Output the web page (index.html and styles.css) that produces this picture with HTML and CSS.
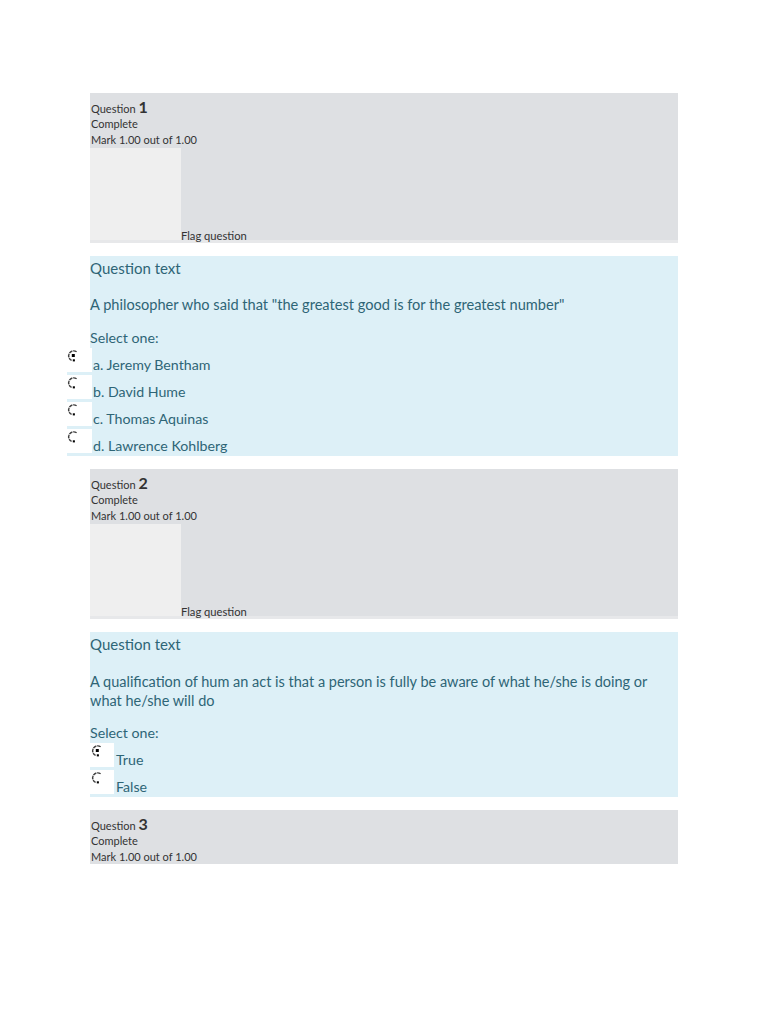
FILE: index.html
```html
<!DOCTYPE html>
<html lang="en">
<head>
<meta charset="utf-8">
<title>Quiz review</title>
<link rel="stylesheet" href="styles.css">
</head>
<body>
<svg width="0" height="0" class="defs" aria-hidden="true">
  <defs>
    <g id="radio-off">
      <path d="M9.6 2.8 A5 5 0 1 0 4.6 11.4" fill="none" stroke="#3f3f3f" stroke-width="1.4" stroke-dasharray="3.6 0.7"/>
      <rect x="5.8" y="10.3" width="2.1" height="2.1" fill="#000"/>
    </g>
    <g id="radio-on">
      <use href="#radio-off"/>
      <rect x="4.8" y="5" width="3" height="3" fill="#000"/>
    </g>
  </defs>
</svg>
<main class="page">
  <section class="info">
    <div class="qno">Question <span class="num">1</span></div>
    <div class="state">Complete</div>
    <div class="grade">Mark 1.00 out of 1.00</div>
    <div class="flag-row">
      <div class="flag-box"></div>
      <div class="flag-label">Flag question</div>
    </div>
  </section>
  <section class="content">
    <h4 class="qtext-title">Question text</h4>
    <p class="qtext">A philosopher who said that "the greatest good is for the greatest number"</p>
    <div class="prompt">Select one:</div>
    <div class="answers out">
      <div class="opt"><span class="rcell"><svg class="radio" viewBox="0 0 13 13"><use href="#radio-on"/></svg></span><span class="lbl">a. Jeremy Bentham</span></div>
      <div class="opt"><span class="rcell"><svg class="radio" viewBox="0 0 13 13"><use href="#radio-off"/></svg></span><span class="lbl">b. David Hume</span></div>
      <div class="opt"><span class="rcell"><svg class="radio" viewBox="0 0 13 13"><use href="#radio-off"/></svg></span><span class="lbl">c. Thomas Aquinas</span></div>
      <div class="opt"><span class="rcell"><svg class="radio" viewBox="0 0 13 13"><use href="#radio-off"/></svg></span><span class="lbl">d. Lawrence Kohlberg</span></div>
    </div>
  </section>

  <section class="info">
    <div class="qno">Question <span class="num">2</span></div>
    <div class="state">Complete</div>
    <div class="grade">Mark 1.00 out of 1.00</div>
    <div class="flag-row">
      <div class="flag-box"></div>
      <div class="flag-label">Flag question</div>
    </div>
  </section>
  <section class="content">
    <h4 class="qtext-title">Question text</h4>
    <p class="qtext two">A qualification of hum an act is that a person is fully be aware of what he/she is doing or what he/she will do</p>
    <div class="prompt">Select one:</div>
    <div class="answers in">
      <div class="opt"><span class="rcell"><svg class="radio" viewBox="0 0 13 13"><use href="#radio-on"/></svg></span><span class="lbl">True</span></div>
      <div class="opt"><span class="rcell"><svg class="radio" viewBox="0 0 13 13"><use href="#radio-off"/></svg></span><span class="lbl">False</span></div>
    </div>
  </section>

  <section class="info short">
    <div class="qno">Question <span class="num">3</span></div>
    <div class="state">Complete</div>
    <div class="grade">Mark 1.00 out of 1.00</div>
  </section>
</main>
</body>
</html>
```
FILE: styles.css
```css
html, body {
  margin: 0;
  padding: 0;
  background: #ffffff;
}
.defs {
  position: absolute;
  width: 0;
  height: 0;
}
.page {
  width: 588px;
  margin: 93px 0 0 90px;
  display: flex;
  flex-direction: column;
  gap: 13px;
  font-family: "Lato", "Open Sans", sans-serif;
}
.info {
  background: #dee0e3;
  padding-top: 4px;
  color: #333333;
  font-size: 11px;
  border-bottom: 3px solid #e7e8ea;
}
.info.short {
  border-bottom: 0;
  height: 50px;
}
.qno {
  height: 19px;
  line-height: 19px;
  padding-left: 1px;
}
.num {
  font-size: 16px;
  font-weight: 700;
}
.state, .grade {
  height: 16px;
  line-height: 16px;
  padding-left: 1px;
}
.flag-row {
  display: flex;
  align-items: flex-end;
  height: 92px;
}
.flag-box {
  width: 91px;
  height: 92px;
  background: #efefef;
}
.flag-label {
  line-height: 14px;
  margin-bottom: -3px;
  font-size: 11.2px;
}
.content {
  background: #ddf0f7;
  color: #2e6576;
  padding-top: 2px;
  font-size: 14px;
}
.qtext-title {
  margin: 0;
  font-weight: 400;
  font-size: 15px;
  line-height: 20px;
}
.qtext {
  margin: 17px 0 0;
  line-height: 20px;
  font-size: 14.6px;
}
.qtext.two {
  margin-top: 18px;
  line-height: 19px;
  padding-right: 10px;
  font-size: 14.5px;
}
.prompt {
  margin-top: 13px;
  line-height: 20px;
  font-size: 14.2px;
}
.answers {
  display: flex;
  flex-direction: column;
}
.opt {
  display: flex;
  align-items: flex-end;
  height: 27px;
}
.rcell {
  align-self: stretch;
  box-sizing: border-box;
  width: 25px;
  background: #ffffff;
  border-bottom: 3px solid #ddf0f7;
  padding: 1px 0 0 0;
}
.answers.out .rcell {
  margin-left: -23px;
}
.answers.in .rcell {
  width: 24px;
  padding-left: 1px;
}
.answers.in .lbl {
  padding-left: 2px;
}
.radio {
  display: block;
  width: 13px;
  height: 13px;
}
.lbl {
  line-height: 20px;
  padding-left: 1px;
  margin-bottom: 0;
  font-size: 14.2px;
}
```
